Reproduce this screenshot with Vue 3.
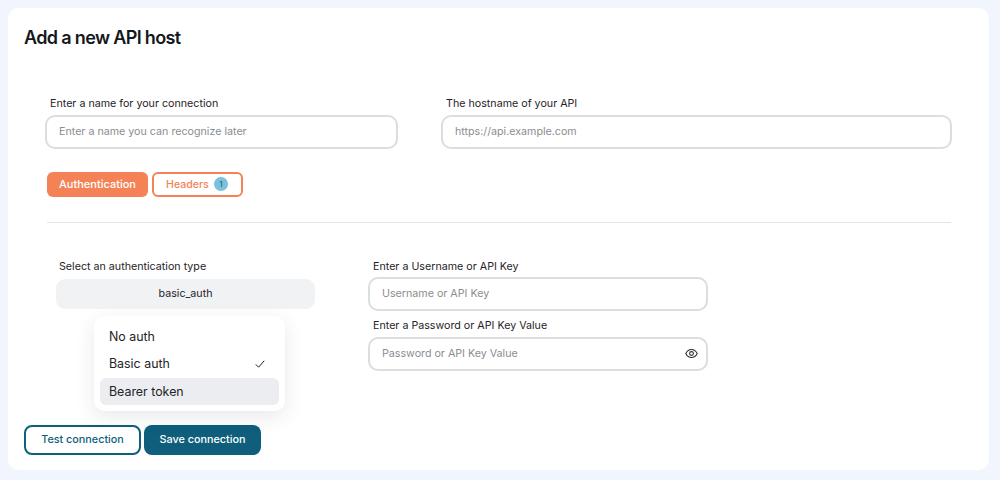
<template>
  <div class="page">
    <div class="card">
      <h1 class="title">Add a new API host</h1>

      <div class="form">
        <div class="host-row">
          <div class="field">
            <label class="label">Enter a name for your connection</label>
            <input class="input" type="text" placeholder="Enter a name you can recognize later" />
          </div>
          <div class="field">
            <label class="label">The hostname of your API</label>
            <input class="input" type="text" placeholder="https://api.example.com" />
          </div>
        </div>

        <div class="tabs">
          <button class="tab tab-active">Authentication</button>
          <button class="tab tab-outline">
            Headers
            <span class="badge">1</span>
          </button>
        </div>

        <div class="divider"></div>

        <div class="auth-row">
          <div class="auth-type">
            <div class="auth-label">Select an authentication type</div>
            <div class="select">basic_auth</div>
            <ul class="menu">
              <li v-for="item in authOptions" :key="item.label" class="menu-item" :class="{ hovered: item.hovered }">
                <span>{{ item.label }}</span>
                <svg v-if="item.selected" class="check" viewBox="0 0 12 12" width="12" height="12">
                  <path d="M1.8 6.4 4.6 9.2 10.2 2.8" fill="none" stroke="#1f2328" stroke-width="1" />
                </svg>
              </li>
            </ul>
          </div>

          <div class="credentials">
            <label class="label">Enter a Username or API Key</label>
            <input class="input" type="text" placeholder="Username or API Key" />
            <label class="label second">Enter a Password or API Key Value</label>
            <div class="input-wrap">
              <input class="input" type="password" placeholder="Password or API Key Value" />
              <svg class="eye" viewBox="0 0 24 24" width="13" height="13" fill="none" stroke="#2b2f33" stroke-width="2">
                <path d="M1.5 12C4 7 7.6 4.5 12 4.5S20 7 22.500 12C20 17 16.400 19.500 12 19.500S4 17 1.500 12Z" />
                <circle cx="12" cy="12" r="3.500" />
              </svg>
            </div>
          </div>
        </div>
      </div>

      <div class="actions">
        <button class="btn btn-outline">Test connection</button>
        <button class="btn btn-solid">Save connection</button>
      </div>
    </div>
  </div>
</template>

<script setup>
const authOptions = [
  { label: 'No auth' },
  { label: 'Basic auth', selected: true },
  { label: 'Bearer token', hovered: true }
]
</script>

<style>
body {
  margin: 0;
}
</style>

<style scoped>
.page {
  width: 1000px;
  height: 480px;
  box-sizing: border-box;
  padding: 8px 11px 10px 8px;
  background: #f1f5fd;
  font-family: Inter, "Liberation Sans", sans-serif;
  color: #1f2328;
}

.card {
  height: 100%;
  box-sizing: border-box;
  padding: 18px 16px 15px;
  background: #fff;
  border-radius: 10px;
  display: flex;
  flex-direction: column;
}

.title {
  margin: 0;
  font-size: 18px;
  line-height: 24px;
  font-weight: 600;
  letter-spacing: -0.65px;
  color: #14181d;
}

.form {
  padding: 47px 0 0 21px;
  width: 907px;
}

.host-row {
  display: grid;
  grid-template-columns: 353px 511px;
  column-gap: 43px;
}

.field {
  display: flex;
  flex-direction: column;
}

.label {
  display: block;
  padding-left: 5px;
  font-size: 10.700px;
  line-height: 13px;
  margin-bottom: 5px;
  color: #1f2328;
}

.input {
  display: block;
  width: 100%;
  height: 34px;
  box-sizing: border-box;
  padding: 0 12px 1px;
  border: 2px solid #dcdddf;
  border-radius: 10px;
  background: #fff;
  font-family: inherit;
  font-size: 10.700px;
  outline: none;
}

.input::placeholder {
  color: #8a8d91;
  opacity: 1;
}

.tabs {
  display: flex;
  gap: 4px;
  margin: 23px 0 0 2px;
}

.tab {
  height: 25px;
  box-sizing: border-box;
  border-radius: 6px;
  font-family: inherit;
  font-size: 11px;
  font-weight: 500;
  display: flex;
  align-items: center;
}

.tab-active {
  width: 101px;
  justify-content: center;
  padding: 0 0 1px;
  border: 0;
  background: #f58257;
  color: #fff;
}

.tab-outline {
  width: 91px;
  padding: 0 0 1px 12px;
  gap: 5px;
  border: 2px solid #f58257;
  background: #fff;
  color: #f58257;
  font-size: 10.600px;
}

.badge {
  width: 14px;
  height: 14px;
  border-radius: 50%;
  background: #7cc0dc;
  color: #1d6a8a;
  font-size: 8px;
  line-height: 14px;
  text-align: center;
}

.divider {
  height: 1px;
  margin: 25px 0 0 2px;
  width: 904px;
  background: #e2e3e5;
}

.auth-row {
  display: flex;
  margin: 37px 0 0 11px;
}

.auth-type {
  position: relative;
  width: 259px;
  margin-right: 53px;
}

.auth-label {
  padding: 0 0 0 3px;
  font-size: 10.700px;
  line-height: 13px;
  margin-bottom: 6px;
}

.select {
  height: 30px;
  line-height: 30px;
  border-radius: 9px;
  background: #f1f2f4;
  text-align: center;
  font-size: 10.700px;
}

.menu {
  position: absolute;
  left: 38px;
  top: 56px;
  width: 191px;
  height: 95px;
  box-sizing: border-box;
  margin: 0;
  padding: 7px 6px 6px;
  list-style: none;
  background: #fff;
  border-radius: 10px;
  box-shadow: 0 6px 20px rgba(30, 40, 60, 0.1);
}

.menu-item {
  height: 27.300px;
  box-sizing: border-box;
  padding: 0 13px 0 9px;
  border-radius: 6px;
  display: flex;
  align-items: center;
  justify-content: space-between;
  font-size: 12.400px;
}

.menu-item.hovered {
  background: #ecedf0;
}

.credentials {
  width: 340px;
}

.credentials > .label:first-child {
  margin-bottom: 4px;
}

.label.second {
  margin: 8px 0 5px;
}

.input-wrap {
  position: relative;
}

.eye {
  position: absolute;
  right: 10px;
  top: 10px;
}

.actions {
  margin-top: auto;
  display: flex;
  gap: 3px;
}

.btn {
  width: 117px;
  height: 30px;
  box-sizing: border-box;
  border-radius: 8px;
  font-family: inherit;
  font-size: 10.800px;
  font-weight: 500;
  padding: 0 0 1px;
}

.btn-outline {
  border: 2px solid #0f5f7c;
  background: #fff;
  color: #0f5f7c;
}

.btn-solid {
  border: 0;
  background: #0f5f7c;
  color: #fff;
}
</style>
